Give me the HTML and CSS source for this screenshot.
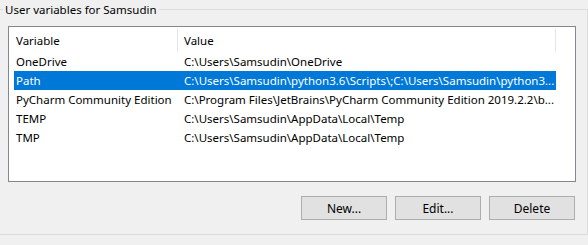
FILE: index.html
```html
<!DOCTYPE html>
<html lang="en">
<head>
<meta charset="UTF-8">
<title>Environment Variables</title>
<link rel="stylesheet" href="styles.css">
</head>
<body>
    <fieldset class="group">
        <legend>User variables for Samsudin</legend>

        <div class="list">
            <div class="list-head">
                <div class="cell name">Variable</div>
                <div class="cell value">Value</div>
            </div>
            <div class="row">
                <div class="cell name">OneDrive</div>
                <div class="cell value">C:\Users\Samsudin\OneDrive</div>
            </div>
            <div class="row selected">
                <div class="cell name">Path</div>
                <div class="cell value">C:\Users\Samsudin\python3.6\Scripts\;C:\Users\Samsudin\python3...</div>
            </div>
            <div class="row">
                <div class="cell name">PyCharm Community Edition</div>
                <div class="cell value">C:\Program Files\JetBrains\PyCharm Community Edition 2019.2.2\b...</div>
            </div>
            <div class="row">
                <div class="cell name">TEMP</div>
                <div class="cell value">C:\Users\Samsudin\AppData\Local\Temp</div>
            </div>
            <div class="row">
                <div class="cell name">TMP</div>
                <div class="cell value">C:\Users\Samsudin\AppData\Local\Temp</div>
            </div>
        </div>

        <div class="actions">
            <button type="button">New...</button>
            <button type="button">Edit...</button>
            <button type="button">Delete</button>
        </div>
    </fieldset>
</body>
</html>
```

FILE: styles.css
```css
/* Windows-style environment variables panel */
body {
    margin: 0;
    background-color: #f0f0f0;
    font-family: "Noto Sans", "Liberation Sans", sans-serif;
    font-size: 11.5px;
    color: #000;
    overflow: hidden;
}
.group {
    margin: 1px 0 0 -1px;
    padding: 8px 11px 14px 8px;
    border: 1px solid #dcdcdc;
    min-width: 0;
}
.group legend {
    margin-left: -5px;
    padding: 0 2px;
    line-height: 17px;
}
.list {
    height: 156px;
    box-sizing: border-box;
    border: 1px solid #828790;
    background-color: #fff;
    padding-left: 5px;
}
.list-head {
    display: flex;
    padding-top: 2px;
    width: 542px;
}
.list-head .cell {
    height: 23px;
    line-height: 23px;
    border-right: 1px solid #e5e5e5;
    box-sizing: border-box;
}
.row {
    display: flex;
    width: 542px;
    height: 19px;
    line-height: 19px;
}
.row.selected {
    background-color: #0078d7;
    color: #fff;
}
.cell {
    white-space: nowrap;
    overflow: hidden;
}
.cell.name {
    width: 164px;
    padding-left: 2px;
    box-sizing: border-box;
}
.cell.value {
    width: 378px;
    padding-left: 6px;
    box-sizing: border-box;
}
.actions {
    display: flex;
    justify-content: flex-end;
    gap: 8px;
    margin-top: 14px;
    padding-right: 1px;
}
.actions button {
    width: 86px;
    height: 24px;
    padding: 0;
    background-color: #e1e1e1;
    border: 1px solid #adadad;
    border-radius: 0;
    font-family: inherit;
    font-size: 12px;
    color: #000;
}
```
